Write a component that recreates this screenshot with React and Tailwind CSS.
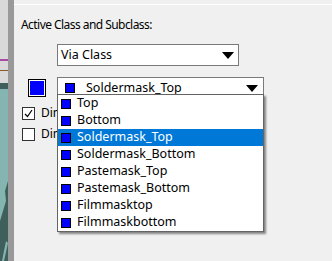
import React from 'react'

const ITEMS = ['Top', 'Bottom', 'Soldermask_Top', 'Soldermask_Bottom', 'Pastemask_Top', 'Pastemask_Bottom', 'Filmmasktop', 'Filmmaskbottom']

function Arrow() {
  return (
    <svg width="12" height="7" viewBox="0 0 12 7" className="shrink-0">
      <path d="M0 0 H12 L6 7 Z" fill="#000" />
    </svg>
  )
}

function Swatch() {
  return <span className="block w-[10px] h-[10px] bg-[#0000ff] border border-black shrink-0" />
}

export default function App() {
  return (
    <div className="w-[332px] h-[261px] flex overflow-hidden text-[12px] text-black" style={{ fontFamily: '"Segoe UI", "Noto Sans", sans-serif' }}>
      {/* background app strip */}
      <div className="w-[8px] flex flex-col">
        <div className="h-[59px] bg-[#d9d9d9]" />
        <div className="h-[2px] bg-[#a64ca6]" />
        <div className="h-[9px] bg-[#d9d9d9]" />
        <div className="h-[1px] bg-[#8b5a2b]" />
        <div className="h-[12px] bg-[#d9d9d9]" />
        <div className="h-[6px] bg-[#3f5f5c]" />
        <div className="flex-1 bg-[#84b5b0] relative overflow-hidden">
          <svg width="8" height="80" viewBox="0 0 8 80" className="absolute left-0 bottom-0">
            <path d="M8 0 L5 10 L6 20 L3 30 L0 40 L0 80 L8 80 Z" fill="#3f5f5c" />
            <path d="M6 60 L2 80 L4 80 L8 62 Z" fill="#84b5b0" />
          </svg>
        </div>
      </div>
      <div className="w-[6px] bg-[#999999]" />

      {/* panel */}
      <div className="flex-1 bg-[#f0f0f0] relative">
        <div className="mt-[4px] h-[1px] bg-white" />
        <div className="pl-[7px] pt-[12px] leading-[16px] tracking-[-0.55px]">Active Class and Subclass:</div>

        <div className="ml-[43px] mt-[11px] w-[182px] h-[22px] bg-white border border-[#7a7a7a] flex items-center justify-between pl-[3px] pr-[4px]">
          <span className="text-[12.5px]">Via Class</span>
          <Arrow />
        </div>

        <div className="flex items-center mt-[11px]">
          <div className="ml-[14px] w-[18px] h-[18px] border border-black bg-white p-[1px]">
            <div className="w-full h-full bg-[#0000ff]" />
          </div>
          <div className="ml-[11px] w-[207px] h-[22px] bg-white border border-[#7a7a7a] flex items-center pl-[7px] pr-[5px]">
            <Swatch />
            <span className="ml-[11px] flex-1 text-[12.5px]">Soldermask_Top</span>
            <Arrow />
          </div>
        </div>

        <div className="flex items-center ml-[8px] mt-[7px] h-[14px]">
          <span className="w-[13px] h-[13px] border border-[#333] bg-white flex items-center justify-center">
            <svg width="9" height="9" viewBox="0 0 9 9"><path d="M1 5 L3.5 7.5 L8 1" fill="none" stroke="#000" strokeWidth="1.2" /></svg>
          </span>
          <span className="ml-[6px]">Dimension</span>
        </div>
        <div className="flex items-center ml-[8px] mt-[7px] h-[14px]">
          <span className="w-[13px] h-[13px] border border-[#333] bg-white" />
          <span className="ml-[6px]">Dimension</span>
        </div>

        {/* open dropdown list */}
        <div className="absolute left-[43px] top-[94px] w-[207px] bg-white border border-[#646464] shadow-[2px_2px_2px_rgba(0,0,0,0.45)] flex flex-col">
          {ITEMS.map((it, i) => (
            <div key={it} className={`h-[17px] flex items-center pl-[3px] ${i === 2 ? 'bg-[#0078d7] text-white' : ''}`}>
              <Swatch />
              <span className="ml-[6px] text-[12.5px]">{it}</span>
            </div>
          ))}
        </div>
      </div>
    </div>
  )
}
